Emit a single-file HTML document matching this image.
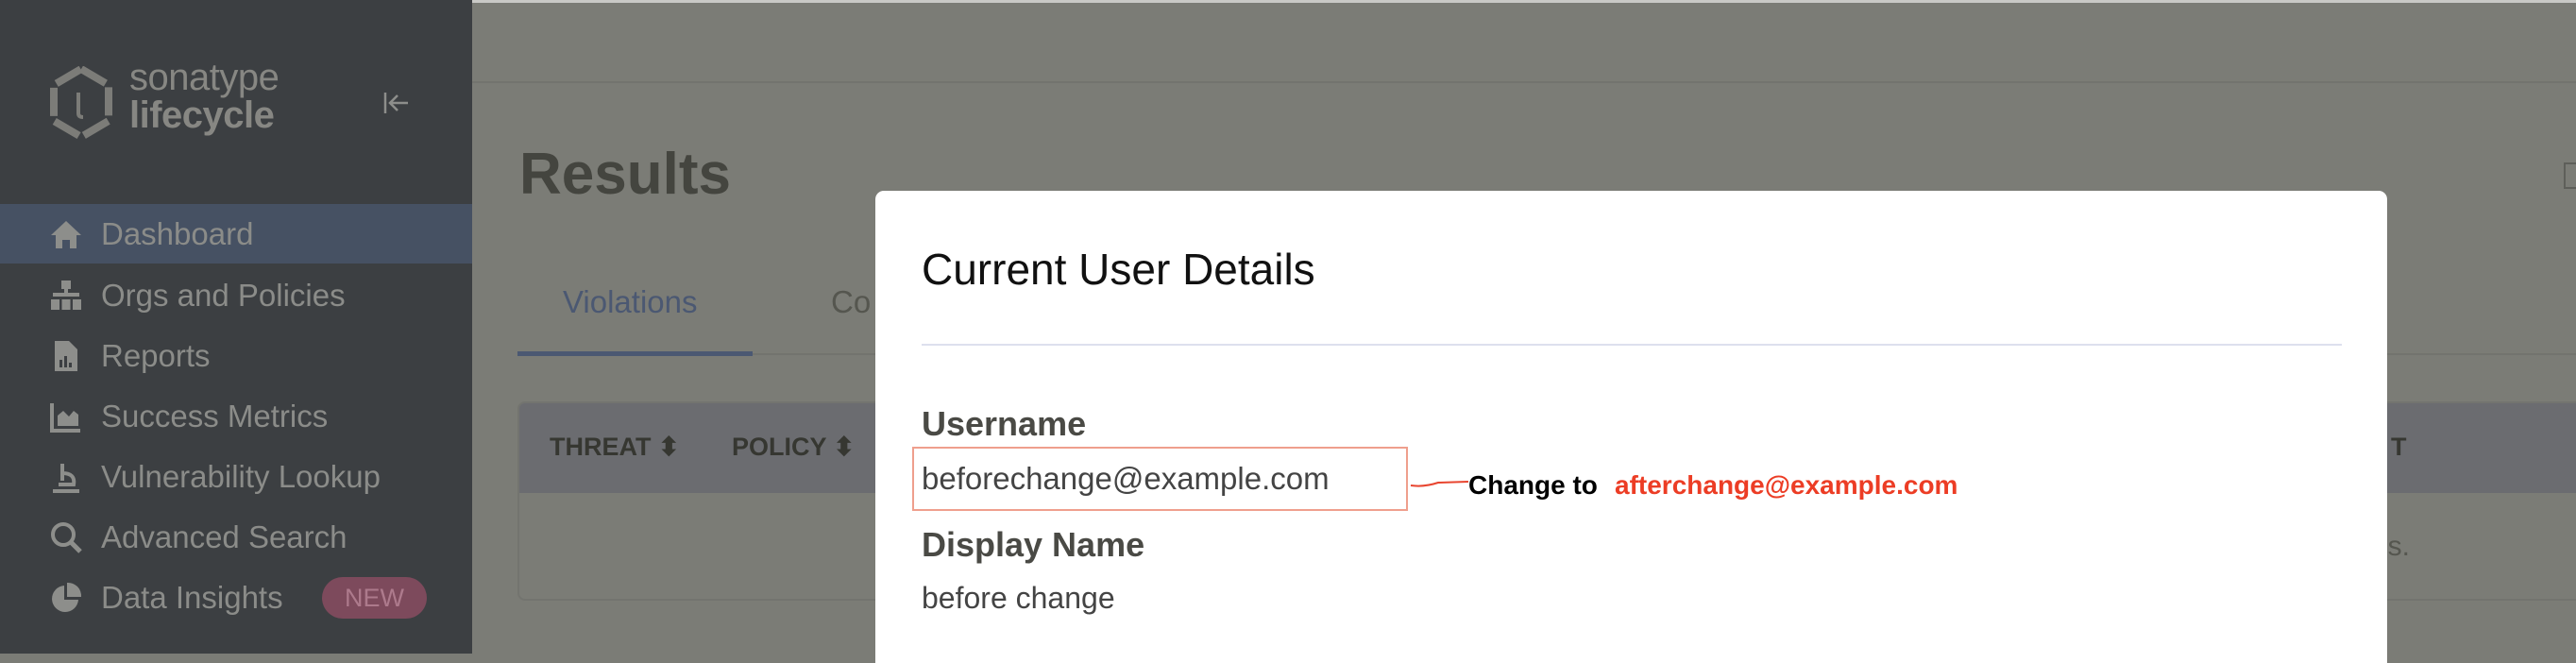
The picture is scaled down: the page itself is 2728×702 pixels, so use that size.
<!DOCTYPE html>
<html><head><meta charset="utf-8"><style>
*{margin:0;padding:0;box-sizing:border-box}
body{width:2728px;height:692px;overflow:hidden;position:relative;background:#7b7c76;font-family:"Liberation Sans",sans-serif}
.a{position:absolute;white-space:nowrap}
#side{left:0;top:0;width:500px;height:692px;background:#3c3f42}
.nav{left:107px;font-size:33px;color:#8b8c89;line-height:40px}
.ic{left:52px;width:36px;height:36px}
</style></head><body>
<div class="a" style="left:0;top:0;width:2728px;height:3px;background:#c9c9c6"></div>
<div class="a" id="side"></div>
<!-- logo -->
<svg class="a" style="left:52px;top:70px" width="68" height="78" viewBox="0 0 68 78">
<path d="M34 3 L63 20 L63 58 L34 75 L5 58 L5 20 Z" fill="none" stroke="#7c7c78" stroke-width="8" stroke-dasharray="30 6"/>
<path d="M31 28 L31 50 Q31 54 36 54" fill="none" stroke="#7c7c78" stroke-width="4"/>
</svg>
<div class="a" style="left:137px;top:60px;font-size:40px;color:#878783;letter-spacing:-0.5px">sonatype</div>
<div class="a" style="left:137px;top:100px;font-size:40px;color:#878783;font-weight:bold;letter-spacing:-0.5px">lifecycle</div>
<svg class="a" style="left:405px;top:96px" width="30" height="26" viewBox="0 0 30 26"><path d="M3 2 V24 M27 13 H9 M16 5 L8 13 L16 21" fill="none" stroke="#8d8e8b" stroke-width="2.5"/></svg>
<!-- nav -->
<div class="a" style="left:0;top:216px;width:500px;height:63px;background:#465163"></div>
<svg class="a ic" style="top:230px" viewBox="0 0 36 36"><path d="M18 4 L34 19 H29 V33 H22 V24 H14 V33 H7 V19 H2 Z" fill="#8d8e8b"/></svg>
<div class="a nav" style="top:228px">Dashboard</div>
<svg class="a ic" style="top:295px" viewBox="0 0 36 36"><g fill="#8d8e8b"><rect x="13" y="2" width="10" height="9"/><rect x="16" y="11" width="4" height="6"/><rect x="4" y="15" width="28" height="4"/><rect x="2" y="22" width="9" height="11"/><rect x="13.5" y="22" width="9" height="11"/><rect x="25" y="22" width="9" height="11"/></g></svg>
<div class="a nav" style="top:293px">Orgs and Policies</div>
<svg class="a ic" style="top:359px" viewBox="0 0 36 36"><path d="M6 2 H21 L30 11 V34 H6 Z" fill="#8d8e8b"/><g fill="#3c3f42"><rect x="11" y="22" width="3" height="8"/><rect x="16" y="18" width="3" height="12"/><rect x="21" y="25" width="3" height="5"/></g></svg>
<div class="a nav" style="top:357px">Reports</div>
<svg class="a ic" style="top:423px" viewBox="0 0 36 36"><path d="M3 4 V33 H33" fill="none" stroke="#8d8e8b" stroke-width="4"/><path d="M9 28 V17 L15 12 L21 18 L26 12 L31 16 V28 Z" fill="#8d8e8b"/></svg>
<div class="a nav" style="top:421px">Success Metrics</div>
<svg class="a ic" style="top:487px" viewBox="0 0 36 36"><path d="M4 33 H32 M14 4 V22 M14 14 Q28 14 26 26 H10" fill="none" stroke="#8d8e8b" stroke-width="4"/></svg>
<div class="a nav" style="top:485px">Vulnerability Lookup</div>
<svg class="a ic" style="top:551px" viewBox="0 0 36 36"><circle cx="15" cy="15" r="11" fill="none" stroke="#8d8e8b" stroke-width="4"/><path d="M23 23 L33 33" stroke="#8d8e8b" stroke-width="5"/></svg>
<div class="a nav" style="top:549px">Advanced Search</div>
<svg class="a ic" style="top:615px" viewBox="0 0 36 36"><path d="M16 5 A14 14 0 1 0 31 20 H16 Z" fill="#8d8e8b"/><path d="M19 2 A14 14 0 0 1 34 17 H19 Z" fill="#8d8e8b"/></svg>
<div class="a nav" style="top:613px">Data Insights</div>
<div class="a" style="left:341px;top:611px;width:111px;height:44px;border-radius:22px;background:#7d4a5c;color:#ad7a8c;font-size:27px;line-height:44px;text-align:center">NEW</div>
<!-- main -->
<div class="a" style="left:500px;top:86px;width:2228px;height:2px;background:#72736e"></div>
<div class="a" style="left:550px;top:149px;font-size:62px;font-weight:bold;color:#44453f">Results</div>
<div class="a" style="left:2715px;top:172px;width:20px;height:28px;border:2px solid #5e5f5a"></div>
<div class="a" style="left:596px;top:301px;font-size:33px;color:#4b5872">Violations</div>
<div class="a" style="left:880px;top:301px;font-size:33px;color:#55564f">Co</div>
<div class="a" style="left:548px;top:374px;width:2180px;height:2px;background:#72736e"></div>
<div class="a" style="left:548px;top:372px;width:249px;height:5px;background:#4b5872"></div>
<div class="a" style="left:548px;top:425px;width:2200px;height:211px;border:2px solid #73746f;border-radius:8px;background:#7b7c76"></div>
<div class="a" style="left:550px;top:427px;width:2200px;height:95px;background:#6b6c70;border-radius:6px 0 0 0"></div>
<div class="a" style="left:582px;top:458px;font-size:27px;font-weight:bold;color:#363731">THREAT ⬍</div>
<div class="a" style="left:775px;top:458px;font-size:27px;font-weight:bold;color:#363731">POLICY ⬍</div>
<div class="a" style="left:2532px;top:458px;font-size:27px;font-weight:bold;color:#363731">T</div>
<div class="a" style="left:2512px;top:562px;font-size:30px;color:#55564f">ns.</div>
<!-- modal -->
<div class="a" style="left:927px;top:202px;width:1601px;height:500px;background:#fff;border-radius:9px 9px 0 0"></div>
<div class="a" style="left:976px;top:258px;font-size:46px;color:#111">Current User Details</div>
<div class="a" style="left:976px;top:364px;width:1504px;height:2px;background:#dde0ee"></div>
<div class="a" style="left:976px;top:428px;font-size:36px;font-weight:bold;color:#4a4a45">Username</div>
<div class="a" style="left:966px;top:473px;width:525px;height:68px;border:2px solid #ef9f8d"></div>
<div class="a" style="left:976px;top:488px;font-size:33px;color:#444">beforechange@example.com</div>
<svg class="a" style="left:1493px;top:505px" width="64" height="14"><path d="M1 9 Q15 11 30 6 L62 5" fill="none" stroke="#e8452f" stroke-width="2"/></svg>
<div class="a" style="left:1555px;top:498px;font-size:28px;font-weight:bold;color:#000">Change to</div>
<div class="a" style="left:1710px;top:498px;font-size:28px;font-weight:bold;color:#ec3d25">afterchange@example.com</div>
<div class="a" style="left:976px;top:556px;font-size:36px;font-weight:bold;color:#4a4a45">Display Name</div>
<div class="a" style="left:976px;top:615px;font-size:32px;color:#444">before change</div>
</body></html>
